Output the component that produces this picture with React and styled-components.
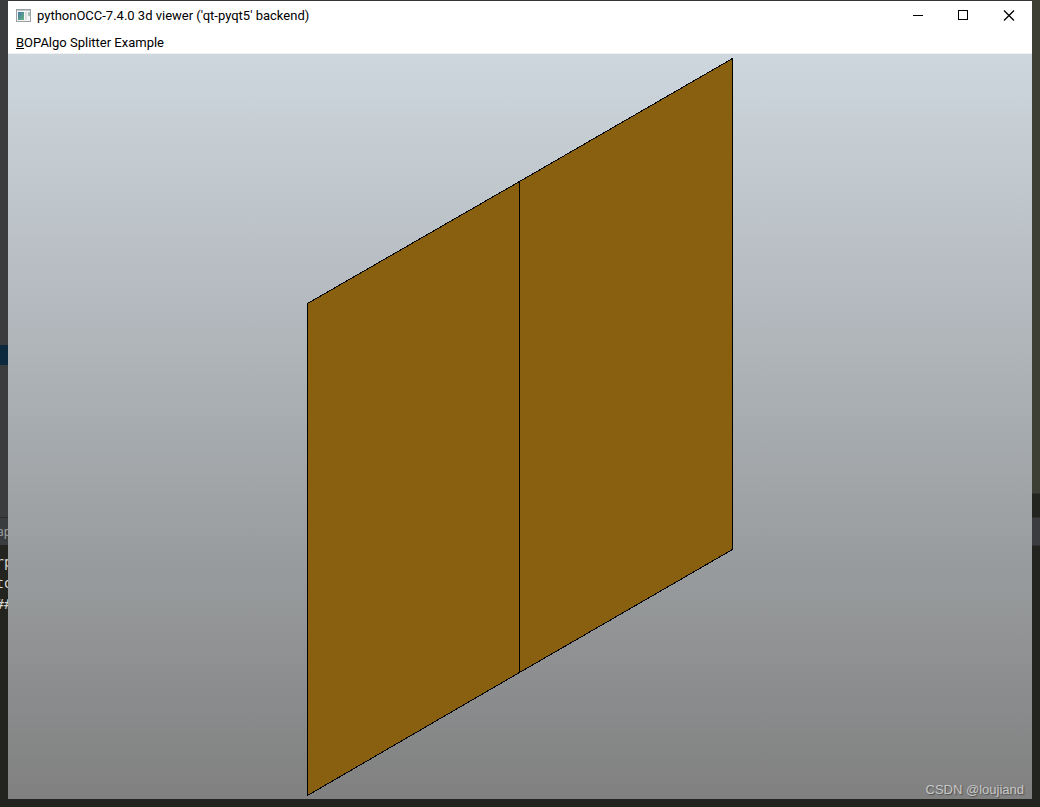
import React from "react";
import styled, { createGlobalStyle } from "styled-components";

const GlobalStyle = createGlobalStyle`
  *, *::before, *::after { box-sizing: border-box; }
  body { margin: 0; background: #23241f; }
`;

const Desktop = styled.div`
  display: grid;
  grid-template-columns: 8px minmax(0, 1fr) 8px;
  height: 100vh;
  min-height: 400px;
  overflow: hidden;
  background: #23241f;
`;

const EditorEdge = styled.aside`
  display: flex;
  flex-direction: column;
  min-width: 0;
  overflow: hidden;
`;

const Band = styled.div`
  flex: ${({ $size }) => ($size ? `0 0 ${$size}px` : "1 1 0")};
  background: ${({ $color }) => $color};
  border-top: ${({ $line }) => ($line ? `1px solid ${$line}` : "0")};
`;

const TabBand = styled(Band)`
  display: flex;
  align-items: center;
  justify-content: center;
  color: #a4a8ab;
  font: 12px/16px "Open Sans", sans-serif;
`;

const ConsoleBand = styled(Band)`
  display: flex;
  flex-direction: column;
  align-items: center;
  padding-top: 7px;
  color: #d6d6d0;
  font: 14px/21px "DejaVu Sans Mono", monospace;
`;

const Column = styled.div`
  display: flex;
  flex-direction: column;
  min-width: 0;
  padding: 1px 0 8px;
  background: linear-gradient(#353535 1px, #23241f 1px);
`;

const Window = styled.main`
  flex: 1;
  display: flex;
  flex-direction: column;
  min-height: 0;
  background: #ffffff;
  color: #000000;
  font: 13px/16px Roboto, sans-serif;
`;

const TitleBar = styled.header`
  display: flex;
  align-items: center;
  height: 29px;
  padding-left: 8px;
`;

const AppIcon = styled.svg`
  width: 16px;
  height: 16px;
  margin-right: 5px;
`;

const Title = styled.h1`
  flex: 1;
  margin: 0;
  font: inherit;
  white-space: nowrap;
`;

const WindowButton = styled.button`
  display: grid;
  place-items: center;
  width: 46px;
  height: 29px;
  padding: 0;
  border: 0;
  background: transparent;
  color: #000000;
  &:hover { background: #e5e5e5; }
`;

const MenuBar = styled.nav`
  display: flex;
  align-items: center;
  height: 24px;
  padding: 2px 8px 0;
  border-bottom: 1px solid #f0f0f0;
`;

const MenuButton = styled.button`
  padding: 0;
  border: 0;
  background: transparent;
  color: inherit;
  font: inherit;
  white-space: nowrap;
`;

const Viewer = styled.section`
  position: relative;
  flex: 1;
  min-height: 0;
  background: linear-gradient(#ced7de, #808080);
`;

const Scene = styled.svg`
  display: block;
  width: 100%;
  height: 100%;
`;

const Watermark = styled.span`
  position: absolute;
  right: 8px;
  bottom: 1px;
  color: #c8c8c8;
  font: 13px/16px "Liberation Sans", Arial, sans-serif;
  text-shadow: 1px 1px 1px #505050;
`;

function WindowGlyph({ children }) {
  return (
    <svg width="12" height="11" viewBox="0 0 12 11" fill="none" stroke="currentColor" aria-hidden="true">
      {children}
    </svg>
  );
}

export default function App() {
  return (
    <>
      <GlobalStyle />
      <Desktop>
        <EditorEdge>
          <Band $size={345} $color="#3a3c3e" />
          <Band $size={20} $color="#0d293e" />
          <Band $size={152} $color="#3a3c3e" />
          <TabBand $size={28} $color="#3a3d40" $line="#2b2b2b">ap</TabBand>
          <ConsoleBand $color="#23241f">
            <span>rp</span>
            <span>to</span>
            <span>##</span>
          </ConsoleBand>
        </EditorEdge>
        <Column>
          <Window>
            <TitleBar>
              <AppIcon viewBox="0 0 16 16" aria-hidden="true">
                <defs>
                  <linearGradient id="pane" x1="0" y1="0" x2="1" y2="1">
                    <stop offset="0" stopColor="#4778a8" />
                    <stop offset="1" stopColor="#62b27c" />
                  </linearGradient>
                </defs>
                <rect x="0.5" y="1.5" width="14" height="12" fill="#f4f4f4" stroke="#9aa0a6" />
                <path d="M1 2.5H14" stroke="#c3c9d0" />
                <rect x="2" y="4" width="6" height="8" fill="url(#pane)" />
                <rect x="9" y="4" width="2" height="8" fill="#dedede" />
                <rect x="12" y="4" width="2" height="4" fill="#a9c4b8" />
              </AppIcon>
              <Title>pythonOCC-7.4.0 3d viewer ('qt-pyqt5' backend)</Title>
              <WindowButton type="button" aria-label="Minimize">
                <WindowGlyph><path d="M2 5.5H12" shapeRendering="crispEdges" /></WindowGlyph>
              </WindowButton>
              <WindowButton type="button" aria-label="Maximize">
                <WindowGlyph><rect x="1.5" y="0.5" width="9" height="9" shapeRendering="crispEdges" /></WindowGlyph>
              </WindowButton>
              <WindowButton type="button" aria-label="Close">
                <WindowGlyph><path d="M1 0.500L11 10.500M11 0.500L1 10.500" strokeWidth="1.3" /></WindowGlyph>
              </WindowButton>
            </TitleBar>
            <MenuBar>
              <MenuButton type="button"><u>B</u>OPAlgo Splitter Example</MenuButton>
            </MenuBar>
            <Viewer>
              <Scene viewBox="0 0 1024 745" role="img" aria-label="Split face in the 3d viewer">
                <g fill="#896010" stroke="#000000" strokeWidth="1" shapeRendering="crispEdges">
                  <path d="M299.500 249.500L511.500 127.500V618.500L299.500 741.500Z" />
                  <path d="M511.500 127.500L724.500 4.500V495.500L511.500 618.500Z" />
                </g>
              </Scene>
              <Watermark>CSDN @loujiand</Watermark>
            </Viewer>
          </Window>
        </Column>
        <EditorEdge>
          <Band $size={493} $color="#3d3e34" />
          <Band $size={24} $color="#23241f" $line="#303030" />
          <Band $size={28} $color="#3a3c40" $line="#303030" />
          <Band $color="#23241f" $line="#303030" />
        </EditorEdge>
      </Desktop>
    </>
  );
}
